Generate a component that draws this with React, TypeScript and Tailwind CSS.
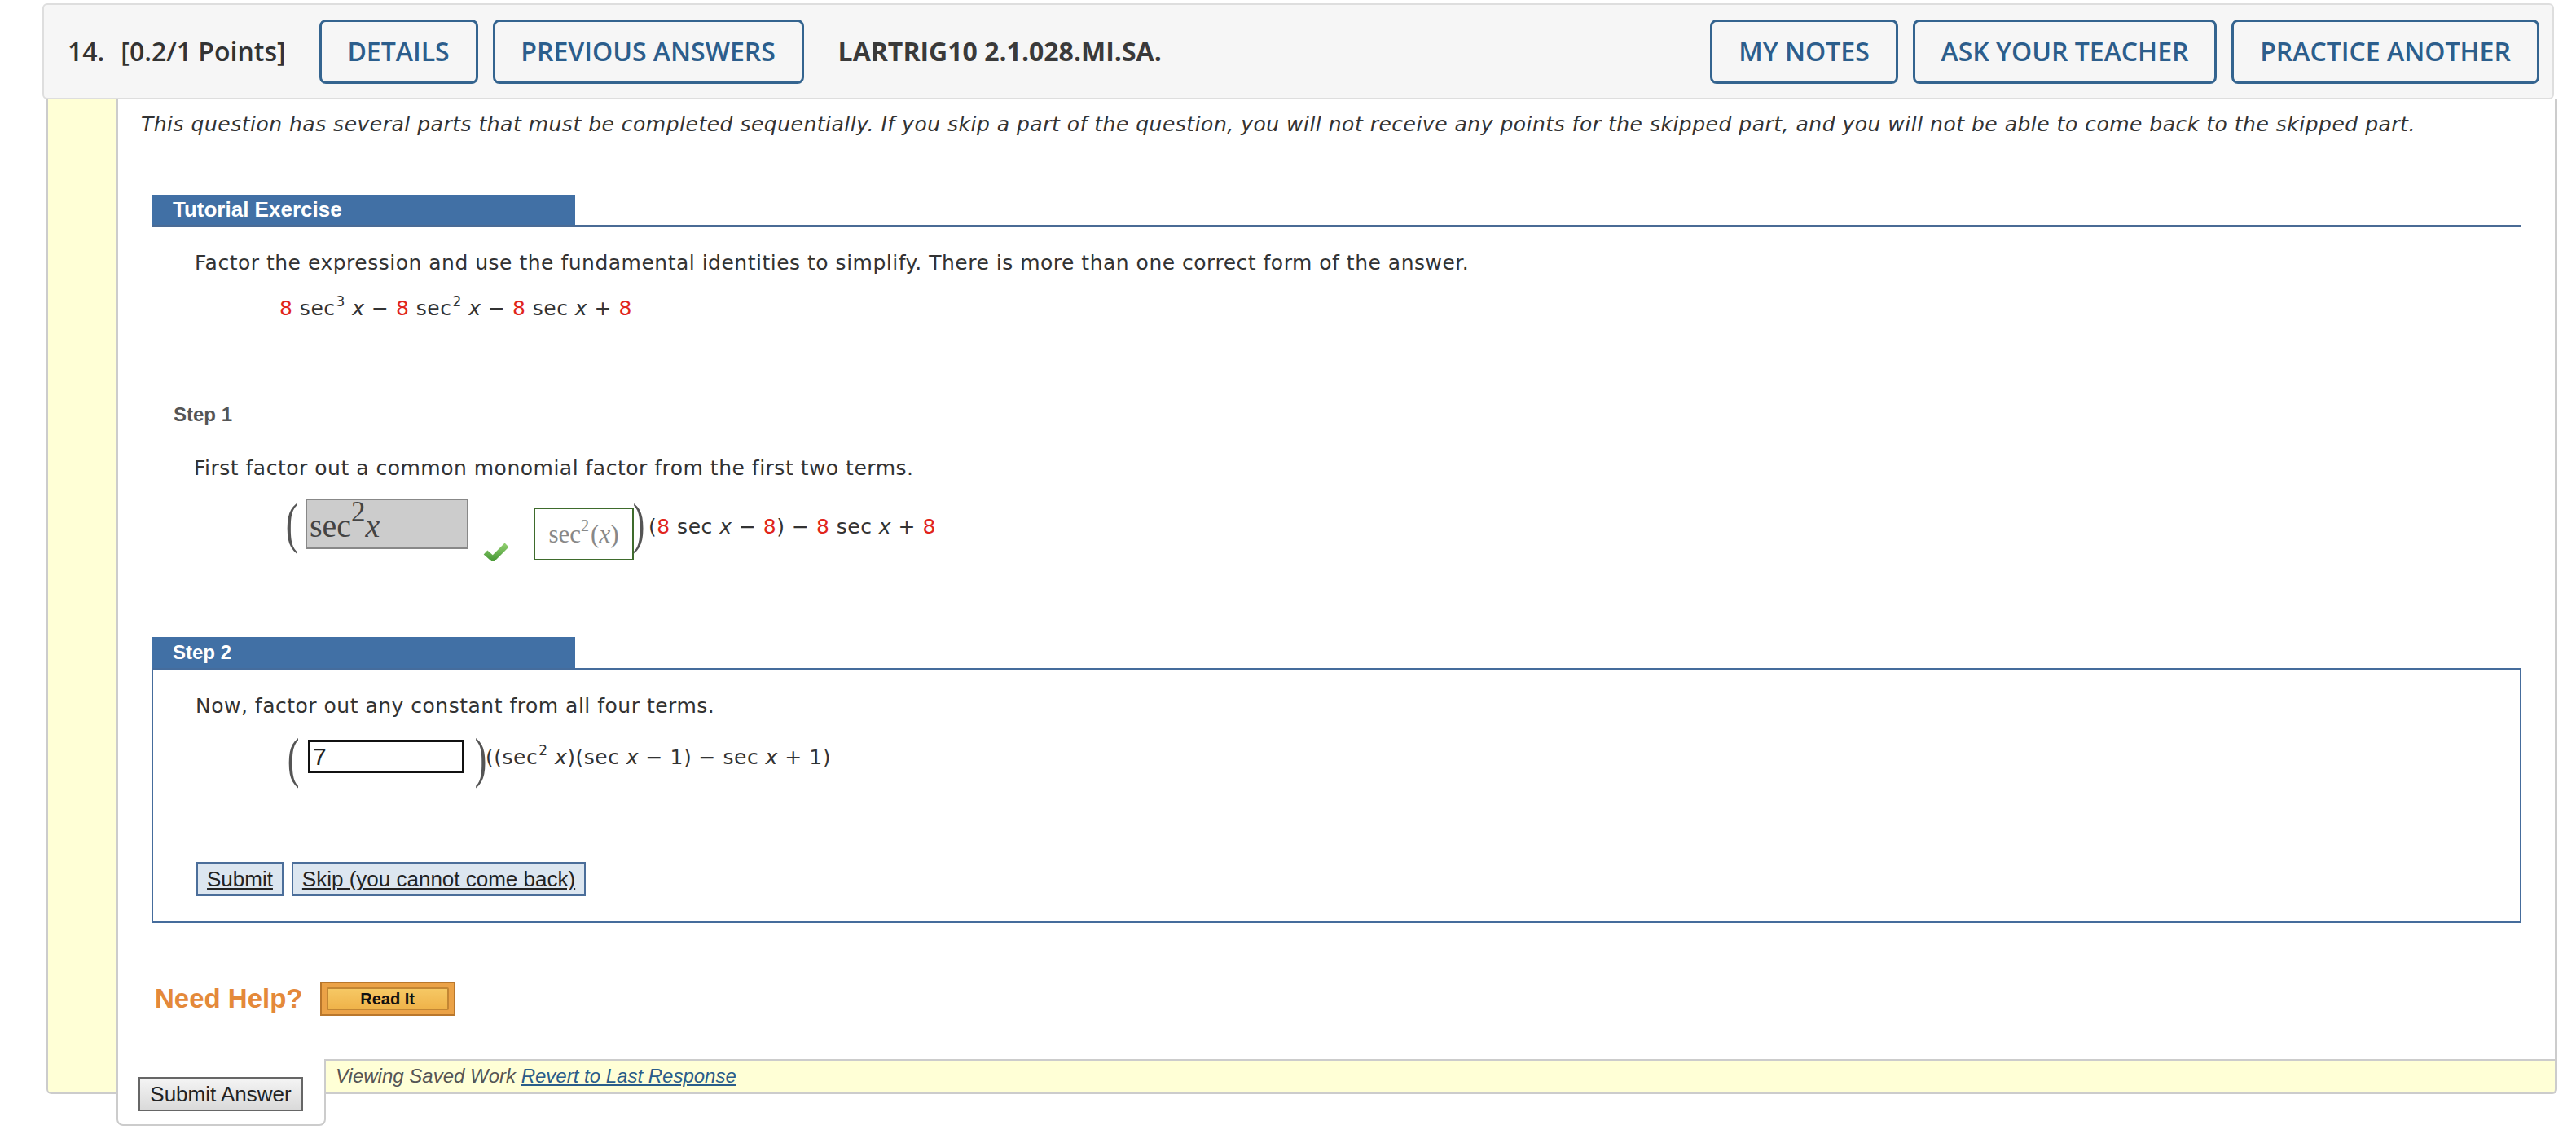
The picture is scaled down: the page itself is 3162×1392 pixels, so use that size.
const sans = "font-['DejaVu_Sans',sans-serif] tracking-[0.5px]"

function Paren({ side, h }: { side: '(' | ')'; h: string }) {
  return (
    <div className={`flex w-[12px] shrink-0 items-center justify-center ${h}`}>
      <span className="inline-block scale-y-[1.55] font-['Liberation_Serif',serif] text-[44px] leading-none font-light text-[#555]">
        {side}
      </span>
    </div>
  )
}

function Red({ children }: { children: React.ReactNode }) {
  return <span className="text-[#e1251b]">{children}</span>
}

function Sup({ children }: { children: React.ReactNode }) {
  return (
    <span className="relative -top-[11px] ml-[1px] text-[17px] leading-none">
      {children}
    </span>
  )
}

function X() {
  return <span className="italic">x</span>
}

function Header() {
  const btn =
    'flex h-[79px] shrink-0 items-center justify-center rounded-[8px] border-[3px] border-[#34648f] text-[32px] font-semibold text-[#2c5e8c]'
  return (
    <div className="flex h-[118px] w-[3083px] items-center rounded-[6px] border-2 border-[#dedede] bg-[#f6f6f6] pl-[29px] font-['Open_Sans',sans-serif]">
      <span className="text-[32px] font-semibold text-[#333]">14.</span>
      <span className="ml-[20px] text-[32px] font-semibold text-[#333]">
        [0.2/1 Points]
      </span>
      <button className={`${btn} ml-[41px] w-[195px]`}>DETAILS</button>
      <button className={`${btn} ml-[18px] w-[382px]`}>PREVIOUS ANSWERS</button>
      <span className="ml-[42px] text-[32px] font-bold text-[#3a3a3a]">
        LARTRIG10 2.1.028.MI.SA.
      </span>
      <div className="ml-auto mr-[16px] flex gap-[18px]">
        <button className={`${btn} w-[231px]`}>MY NOTES</button>
        <button className={`${btn} w-[373px]`}>ASK YOUR TEACHER</button>
        <button className={`${btn} w-[378px]`}>PRACTICE ANOTHER</button>
      </div>
    </div>
  )
}

function Check() {
  return (
    <svg width="32" height="24" viewBox="0 0 32 24" className="mt-[55px] ml-[18px] shrink-0">
      <defs>
        <linearGradient id="ck" x1="0" y1="0" x2="0" y2="1">
          <stop offset="0" stopColor="#8ccb6c" />
          <stop offset="1" stopColor="#4f9e3c" />
        </linearGradient>
      </defs>
      <path d="M3 13 L12 21 L29 4" fill="none" stroke="url(#ck)" strokeWidth="7" strokeLinejoin="round" />
    </svg>
  )
}

function Tutorial() {
  return (
    <div className="mx-[41px]">
      <div className="flex border-b-[3px] border-[#4a6b95]">
        <div className="flex h-[37px] w-[520px] items-center bg-[#4170a5] pl-[26px] font-['Liberation_Sans',sans-serif] text-[26px] font-bold text-white">
          Tutorial Exercise
        </div>
      </div>

      <p className={`${sans} ml-[53px] mt-[27px] text-[25px] leading-[34px] text-[#333]`}>
        Factor the expression and use the fundamental identities to simplify. There is more than one correct form of the answer.
      </p>
      <p className={`${sans} ml-[157px] mt-[22px] text-[25px] leading-[34px] text-[#333]`}>
        <Red>8</Red> sec<Sup>3</Sup> <X /> − <Red>8</Red> sec<Sup>2</Sup> <X /> − <Red>8</Red> sec <X /> + <Red>8</Red>
      </p>

      <p className="ml-[27px] mt-[99px] font-['Liberation_Sans',sans-serif] text-[24px] leading-[28px] font-bold text-[#555]">
        Step 1
      </p>
      <p className={`${sans} ml-[52px] mt-[35px] text-[25px] leading-[34px] text-[#333]`}>
        First factor out a common monomial factor from the first two terms.
      </p>
      <div className="ml-[166px] mt-[18px] flex h-[80px] items-start">
        <Paren side="(" h="h-[65px]" />
        <div className="ml-[11px] mt-[2px] h-[62px] w-[200px] shrink-0 border-2 border-[#888] bg-[#cccccc] pl-[3px] pt-[12px] font-['Liberation_Serif',serif] text-[40px] leading-none text-[#444]">
          sec
          <span className="relative -top-[19px] text-[35px]">2</span>
          <span className="italic">x</span>
        </div>
        <Check />
        <div className="ml-[30px] mt-[13px] flex h-[65px] w-[123px] shrink-0 items-center justify-center border-2 border-[#3e6b2c] bg-white font-['Liberation_Serif',serif] text-[31px] leading-none text-[#888]">
          sec<span className="relative -top-[11px] text-[20px]">2</span>
          <span className="ml-[2px]">(</span>
          <span className="italic">x</span>)
        </div>
        <Paren side=")" h="h-[65px]" />
        <span className={`${sans} ml-[6px] mt-[20px] whitespace-nowrap text-[25px] leading-[34px] text-[#333]`}>
          (<Red>8</Red> sec <X /> − <Red>8</Red>) − <Red>8</Red> sec <X /> + <Red>8</Red>
        </span>
      </div>

      <div className="mt-[92px] flex h-[38px] w-[520px] items-center bg-[#4170a5] pl-[26px] font-['Liberation_Sans',sans-serif] text-[24px] font-bold text-white">
        Step 2
      </div>
      <div className="border-2 border-[#456c9c] pb-[31px] pt-[28px]">
        <p className={`${sans} ml-[52px] text-[25px] leading-[34px] text-[#333]`}>
          Now, factor out any constant from all four terms.
        </p>
        <div className="ml-[166px] mt-[19px] flex h-[55px] items-start">
          <Paren side="(" h="h-[55px]" />
          <div className="ml-[12px] mt-[5px] flex h-[41px] w-[192px] shrink-0 items-center border-[3px] border-[#111] bg-white pl-[3px] font-['Liberation_Sans',sans-serif] text-[30px] text-[#222]">
            7
          </div>
          <div className="ml-[14px]">
            <Paren side=")" h="h-[55px]" />
          </div>
          <span className={`${sans} mt-[10px] whitespace-nowrap text-[25px] leading-[34px] text-[#333]`}>
            ((sec<Sup>2</Sup> <X />)(sec <X /> − 1) − sec <X /> + 1)
          </span>
        </div>
        <div className="ml-[53px] mt-[100px] flex gap-[10px] font-['Liberation_Sans',sans-serif] text-[26px] text-[#222]">
          <button className="h-[42px] w-[107px] border-2 border-[#4b6e9a] bg-[#dce6f0] underline">
            Submit
          </button>
          <button className="h-[42px] w-[361px] border-2 border-[#4b6e9a] bg-[#dce6f0] underline">
            Skip (you cannot come back)
          </button>
        </div>
      </div>

      <div className="ml-[4px] mt-[72px] flex h-[42px] items-center">
        <span className="font-['Liberation_Sans',sans-serif] text-[33px] font-bold text-[#e4893a]">
          Need Help?
        </span>
        <div className="ml-[21px] h-[42px] w-[166px] border-2 border-[#b9772c] bg-[#eba247] px-[6px] py-[5px]">
          <div className="flex h-full items-center justify-center rounded-[2px] border-2 border-[#c38633] bg-gradient-to-b from-[#f6c864] to-[#efb34a] font-['Liberation_Sans',sans-serif] text-[20px] font-bold text-[#111]">
            Read It
          </div>
        </div>
      </div>
    </div>
  )
}

export default function App() {
  return (
    <div className="min-h-screen bg-white pt-[4px]">
      <div className="ml-[52px]">
        <Header />
        <div className="ml-[5px] flex w-[3082px]">
          <div className="w-[86px] shrink-0 rounded-bl-[6px] border-b-2 border-l-2 border-[#cccccc] bg-[#ffffd6]" />
          <div className="flex flex-1 flex-col">
            <div className="border-l-2 border-r-[3px] border-[#cccccc] bg-white pb-[53px] pt-[13px]">
              <p className="ml-[28px] font-['DejaVu_Sans',sans-serif] text-[25px] leading-[36px] tracking-[0.5px] italic text-[#333]">
                This question has several parts that must be completed sequentially. If you skip a part of the question, you will not receive any points for the skipped part, and you will not be able to come back to the skipped part.
              </p>
              <div className="mt-[68px]">
                <Tutorial />
              </div>
            </div>
            <div className="flex items-start">
              <div className="-mb-[39px] h-[82px] w-[257px] shrink-0 rounded-b-[8px] border-2 border-t-0 border-[#cccccc] bg-white pl-[25px] pt-[22px]">
                <button className="h-[42px] w-[202px] border-2 border-[#666] bg-gradient-to-b from-[#f4f4f4] to-[#dadada] font-['Liberation_Sans',sans-serif] text-[26px] text-[#222]">
                  Submit Answer
                </button>
              </div>
              <div className="h-[43px] flex-1 rounded-br-[6px] border-y-2 border-r-[3px] border-[#cccccc] bg-[#ffffd6] pl-[12px] pt-[5px] font-['Liberation_Sans',sans-serif] text-[24px] leading-[28px] italic text-[#555]">
                Viewing Saved Work{' '}
                <span className="text-[#2a5d8a] underline">Revert to Last Response</span>
              </div>
            </div>
          </div>
        </div>
      </div>
    </div>
  )
}
